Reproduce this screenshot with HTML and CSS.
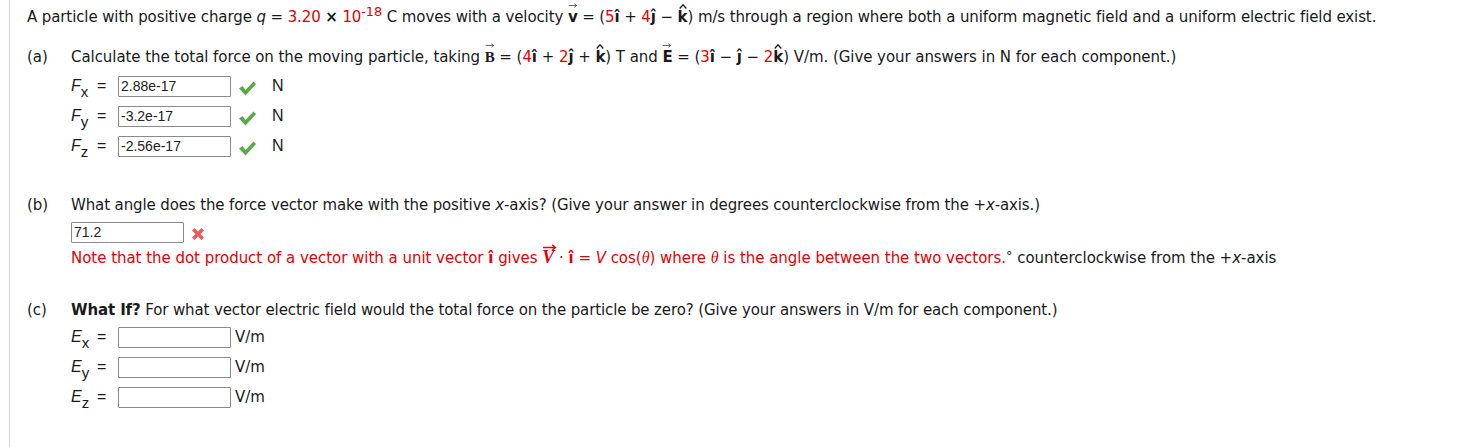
FILE: index.html
```html
<!DOCTYPE html>
<html>
<head>
<meta charset="utf-8">
<link rel="stylesheet" href="styles.css">
</head>
<body>
<div class="page">
  <p class="intro">A particle with positive charge <i>q</i> = <span class="red">3.20</span> <b class="times">×</b> <span class="red">10<sup>-18</sup></span> C moves with a velocity <span class="vec"><b>v</b><svg class="arr" viewBox="0 0 10 5"><path d="M0 2.5H9M6.5 0.5L9 2.5L6.5 4.5" stroke="#444" stroke-width="0.9" fill="none"/></svg></span> = (<span class="red">5</span><b>î</b> + <span class="red">4</span><b>ĵ</b> − <b class="hat">k<svg class="hatmark" viewBox="0 0 8 5"><path d="M0.7 4.5L4 0.8L7.3 4.5" stroke="#1a1a1a" stroke-width="1.3" fill="none"/></svg></b>) m/s through a region where both a uniform magnetic field and a uniform electric field exist.</p>

  <div class="part part-a">
    <div class="plabel">(a)</div>
    <div class="pbody">
      <p class="q qa">Calculate the total force on the moving particle, taking <span class="vec"><b class="serif">B</b><svg class="arr" viewBox="0 0 10 5"><path d="M0 2.5H9M6.5 0.5L9 2.5L6.5 4.5" stroke="#444" stroke-width="0.9" fill="none"/></svg></span> = (<span class="red">4</span><b>î</b> + <span class="red">2</span><b>ĵ</b> + <b class="hat">k<svg class="hatmark" viewBox="0 0 8 5"><path d="M0.7 4.5L4 0.8L7.3 4.5" stroke="#1a1a1a" stroke-width="1.3" fill="none"/></svg></b>) T and <span class="vec"><b>E</b><svg class="arr" viewBox="0 0 10 5"><path d="M0 2.5H9M6.5 0.5L9 2.5L6.5 4.5" stroke="#444" stroke-width="0.9" fill="none"/></svg></span> = (<span class="red">3</span><b>î</b> − <b>ĵ</b> − <span class="red">2</span><b class="hat">k<svg class="hatmark" viewBox="0 0 8 5"><path d="M0.7 4.5L4 0.8L7.3 4.5" stroke="#1a1a1a" stroke-width="1.3" fill="none"/></svg></b>) V/m. (Give your answers in N for each component.)</p>
      <div class="rows">
        <div class="row">
          <span class="var"><i>F</i><sub>x</sub></span><span class="eq">=</span><span class="box">2.88e-17</span>
          <svg class="icon check" viewBox="0 0 20 20"><path d="M2 10.5 L5.5 8 L8.5 12 L16.5 3.5 L19 6 L8.5 17.5 Z" fill="#5aa84a"/></svg>
          <span class="unit-n">N</span>
        </div>
        <div class="row">
          <span class="var"><i>F</i><sub>y</sub></span><span class="eq">=</span><span class="box">-3.2e-17</span>
          <svg class="icon check" viewBox="0 0 20 20"><path d="M2 10.5 L5.5 8 L8.5 12 L16.5 3.5 L19 6 L8.5 17.5 Z" fill="#5aa84a"/></svg>
          <span class="unit-n">N</span>
        </div>
        <div class="row">
          <span class="var"><i>F</i><sub>z</sub></span><span class="eq">=</span><span class="box">-2.56e-17</span>
          <svg class="icon check" viewBox="0 0 20 20"><path d="M2 10.5 L5.5 8 L8.5 12 L16.5 3.5 L19 6 L8.5 17.5 Z" fill="#5aa84a"/></svg>
          <span class="unit-n">N</span>
        </div>
      </div>
    </div>
  </div>

  <div class="part part-b">
    <div class="plabel">(b)</div>
    <div class="pbody">
      <p class="q">What angle does the force vector make with the positive <i>x</i>-axis? (Give your answer in degrees counterclockwise from the +<i>x</i>-axis.)</p>
      <div class="brow">
        <span class="box">71.2</span>
        <svg class="icon cross" viewBox="0 0 16 16"><path d="M2 4.5 L4.5 2 L8 5.5 L11.5 2 L14 4.5 L10.5 8 L14 11.5 L11.5 14 L8 10.5 L4.5 14 L2 11.5 L5.5 8 Z" fill="#ec5a5a"/></svg>
      </div>
      <p class="note"><span class="red">Note that the dot product of a vector with a unit vector <b>î</b> gives <span class="vec vecv"><b class="serif bigv"><i>V</i></b><svg class="arr" viewBox="0 0 10 5"><path d="M0 2.5H9M6.5 0.5L9 2.5L6.5 4.5" stroke="#e60000" stroke-width="0.9" fill="none"/></svg></span> · <b>î</b> = <i>V</i> cos(<i class="serif theta">θ</i>) where <i class="serif theta">θ</i> is the angle between the two vectors.</span><span class="deg">°</span> counterclockwise from the +<i>x</i>-axis</p>
    </div>
  </div>

  <div class="part part-c">
    <div class="plabel">(c)</div>
    <div class="pbody">
      <p class="q"><b>What If?</b> For what vector electric field would the total force on the particle be zero? (Give your answers in V/m for each component.)</p>
      <div class="rows">
        <div class="row">
          <span class="var"><i>E</i><sub>x</sub></span><span class="eq">=</span><span class="box"></span><span class="unit-v">V/m</span>
        </div>
        <div class="row">
          <span class="var"><i>E</i><sub>y</sub></span><span class="eq">=</span><span class="box"></span><span class="unit-v">V/m</span>
        </div>
        <div class="row">
          <span class="var"><i>E</i><sub>z</sub></span><span class="eq">=</span><span class="box"></span><span class="unit-v">V/m</span>
        </div>
      </div>
    </div>
  </div>
</div>
</body>
</html>
```
FILE: styles.css
```css
html, body {
  margin: 0;
  padding: 0;
  background: #fff;
}
body {
  font-family: "DejaVu Sans", Verdana, sans-serif;
  font-size: 15px;
  color: #1a1a1a;
}
.page {
  margin-left: 9px;
  border-left: 1px solid #d2d2d2;
  padding-left: 17px;
  height: 447px;
  box-sizing: border-box;
  padding-top: 7px;
}
p { margin: 0; }
.intro, .q, .note {
  line-height: 20px;
  white-space: nowrap;
}
.intro { letter-spacing: -0.11px; }
.q { letter-spacing: -0.12px; }
.qa { letter-spacing: -0.06px; }
.note { letter-spacing: -0.03px; }
.red { color: #e60000; }
.times { font-weight: bold; }
sup {
  font-size: 13px;
  vertical-align: 6px;
  line-height: 0;
}
.serif { font-family: "Liberation Serif", "Times New Roman", serif; }
.vec {
  position: relative;
  display: inline-block;
}
.vec .arr {
  position: absolute;
  left: 50%;
  top: -4px;
  width: 9px;
  height: 5px;
  transform: translateX(-50%);
}
.vecv .arr {
  width: 14px;
  height: 7px;
  top: -4px;
  left: 60%;
}
.bigv { font-size: 18px; line-height: 0; }
.theta { font-size: 16px; }
.hat {
  position: relative;
  display: inline-block;
}
.hatmark {
  position: absolute;
  left: 50%;
  top: -3px;
  width: 8px;
  height: 5px;
  transform: translateX(-50%);
}
.part {
  display: grid;
  grid-template-columns: 44px 1fr;
}
.plabel {
  line-height: 20px;
}
.part-a { margin-top: 20px; }
.part-b { margin-top: 34px; }
.part-c { margin-top: 32px; }
.part-a .rows { margin-top: 4px; }
.part-c .rows { margin-top: 2px; }
.row {
  display: flex;
  align-items: center;
  height: 30px;
  font-family: "Liberation Sans", Arial, sans-serif;
}
.var {
  width: 26px;
  font-size: 16px;
}
.var sub {
  font-size: 15px;
  vertical-align: -6px;
  line-height: 0;
}
.eq {
  width: 21px;
  font-size: 16px;
}
.box {
  display: inline-block;
  box-sizing: border-box;
  width: 113px;
  height: 21px;
  border: 1px solid #8a8a8a;
  border-radius: 1px;
  font-family: "Liberation Sans", Arial, sans-serif;
  font-size: 14px;
  line-height: 19px;
  padding-left: 2px;
  color: #222;
}
.icon.check {
  width: 20px;
  height: 20px;
  margin-left: 6px;
  margin-top: 4px;
}
.unit-n {
  margin-left: 15px;
  font-size: 16px;
}
.unit-v {
  margin-left: 4px;
  font-family: "DejaVu Sans", Verdana, sans-serif;
  font-size: 15px;
}
.brow {
  display: flex;
  align-items: center;
  height: 24px;
  margin-top: 5px;
}
.icon.cross {
  width: 16px;
  height: 16px;
  margin-left: 6px;
  margin-top: 4px;
}
.note { margin-top: 4px; }
.deg { font-size: 13px; vertical-align: 3px; line-height: 0; }
```
